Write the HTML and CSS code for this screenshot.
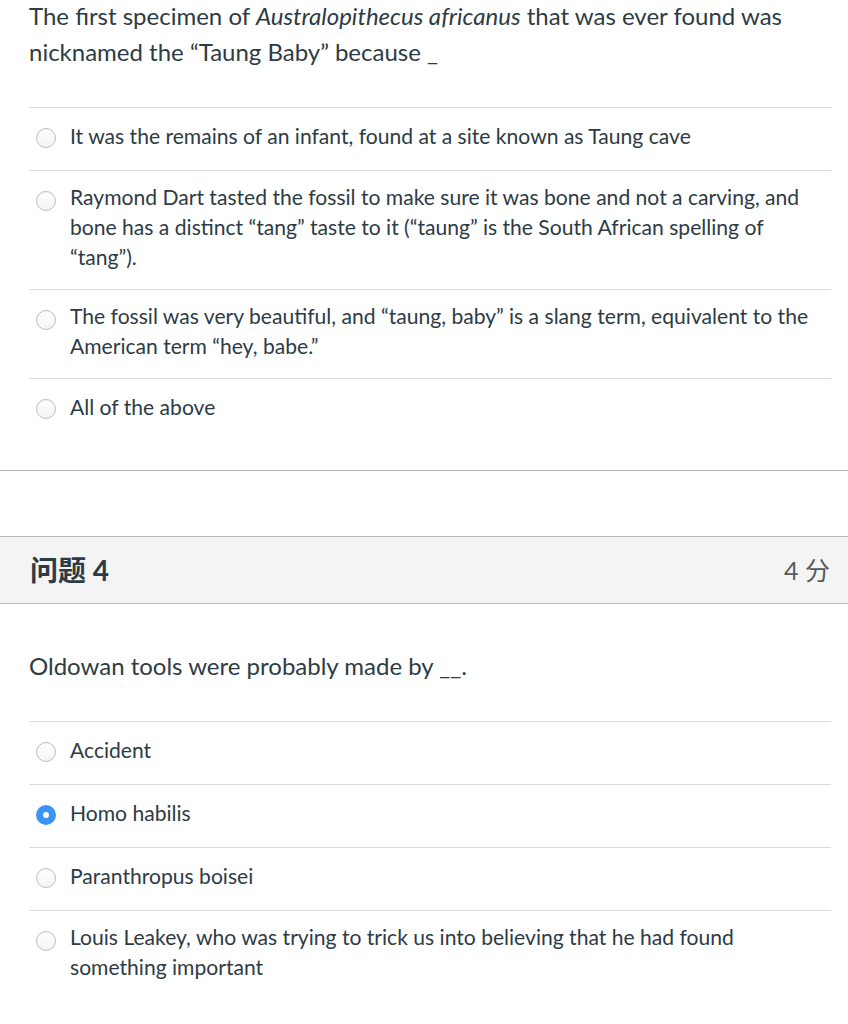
FILE: index.html
```html
<!DOCTYPE html>
<html lang="zh">
<head>
<meta charset="utf-8">
<title>Quiz</title>
<link rel="stylesheet" href="styles.css">
</head>
<body>
<section class="question first">
  <div class="q-body">
    <p class="q-text">The first specimen of <em>Australopithecus africanus</em> that was ever found was nicknamed the “Taung Baby” because _</p>
    <div class="answers">
      <div class="answer"><span class="radio"></span><span class="a-text">It was the remains of an infant, found at a site known as Taung cave</span></div>
      <div class="answer"><span class="radio"></span><span class="a-text">Raymond Dart tasted the fossil to make sure it was bone and not a carving, and bone has a distinct “tang” taste to it (“taung” is the South African spelling of “tang”).</span></div>
      <div class="answer"><span class="radio"></span><span class="a-text">The fossil was very beautiful, and “taung, baby” is a slang term, equivalent to the American term “hey, babe.”</span></div>
      <div class="answer"><span class="radio"></span><span class="a-text">All of the above</span></div>
    </div>
  </div>
</section>

<section class="question second">
  <header class="q-header">
    <h2 class="q-title">问题 4</h2>
    <span class="q-points">4 分</span>
  </header>
  <div class="q-body">
    <p class="q-text">Oldowan tools were probably made by __.</p>
    <div class="answers">
      <div class="answer"><span class="radio"></span><span class="a-text">Accident</span></div>
      <div class="answer"><span class="radio checked"></span><span class="a-text">Homo habilis</span></div>
      <div class="answer"><span class="radio"></span><span class="a-text">Paranthropus boisei</span></div>
      <div class="answer"><span class="radio"></span><span class="a-text">Louis Leakey, who was trying to trick us into believing that he had found something important</span></div>
    </div>
  </div>
</section>
</body>
</html>
```

FILE: styles.css
```css
html, body {
  margin: 0;
  padding: 0;
  background: #fff;
}

body {
  font-family: Lato, "Noto Sans CJK SC", sans-serif;
  color: #2d3b45;
  overflow: hidden;
}

.question.first {
  border-bottom: 1px solid #b4b4b4;
  padding-bottom: 29px;
  margin-top: -2px;
}

.q-body {
  padding-left: 29px;
  width: 802px;
}

.q-text {
  margin: 0;
  font-size: 24px;
  line-height: 36px;
}

.q-text em {
  font-style: italic;
}

.answers {
  margin-top: 37px;
}

.answer {
  display: flex;
  align-items: flex-start;
  border-top: 1px solid #dcdcdc;
  min-height: 62px;
}

.radio {
  flex: none;
  box-sizing: border-box;
  width: 20px;
  height: 20px;
  margin: 20px 14px 0 7px;
  border-radius: 50%;
  border: 1px solid #bdbdbd;
  background: linear-gradient(#ffffff, #f4f4f4);
  box-shadow: inset 0 1px 1px rgba(0, 0, 0, 0.04);
}

.radio.checked {
  border: none;
  background: #3b93f5;
  display: flex;
  align-items: center;
  justify-content: center;
  box-shadow: none;
}

.radio.checked::after {
  content: "";
  width: 6px;
  height: 6px;
  border-radius: 50%;
  background: #fff;
}

.a-text {
  align-self: center;
  padding: 11px 0 17px;
  font-size: 21.1px;
  line-height: 30px;
}

.question.second {
  margin-top: 65px;
}

.q-header {
  display: flex;
  align-items: center;
  justify-content: space-between;
  height: 66px;
  padding: 0 18px 0 30px;
  background: #f4f4f4;
  border-top: 1px solid #b9b9b9;
  border-bottom: 1px solid #b9b9b9;
}

.q-title {
  margin: 0 0 2px;
  font-size: 28px;
  font-weight: 700;
  color: #2d3b45;
}

.q-points {
  margin-bottom: 2px;
  font-size: 25px;
  color: #555a5e;
}

.question.second .q-body {
  padding-top: 44px;
}
```
